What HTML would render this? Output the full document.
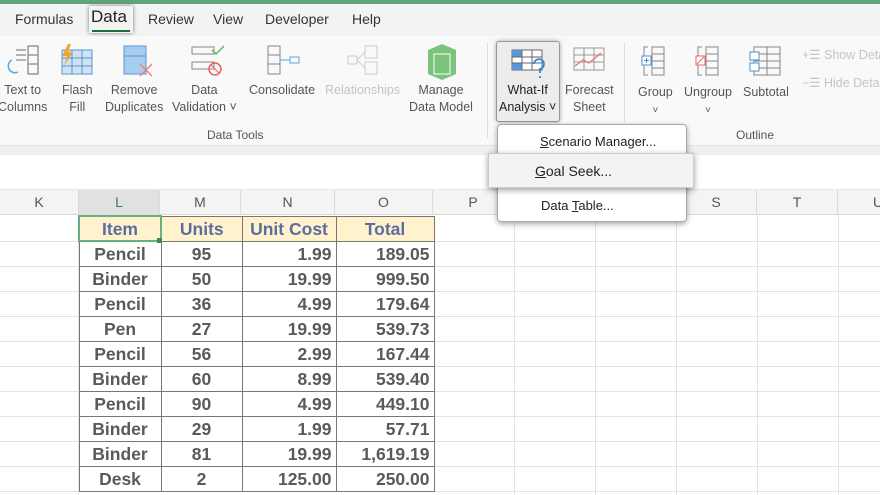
<!DOCTYPE html>
<html><head><meta charset="utf-8"><style>
*{margin:0;padding:0;box-sizing:border-box}
body{width:880px;height:495px;overflow:hidden;background:#fff;font-family:"Liberation Sans",sans-serif;position:relative}
.a{position:absolute}
.tab{position:absolute;top:11px;font-size:14px;color:#333}
.lbl{position:absolute;font-size:12.5px;color:#555;text-align:center;line-height:17px;white-space:nowrap}
.dis{color:#c4c4c4}
.ch{position:absolute;top:190px;height:25px;font-size:14px;color:#555;text-align:center;line-height:25px;border-right:1px solid #dadada}
.vl{position:absolute;top:215px;height:280px;width:1px;background:#e3e3e3}
.hl{position:absolute;left:0;width:880px;height:1px;background:#e3e3e3}
table{position:absolute;left:78px;top:215px;border-collapse:collapse;table-layout:fixed;width:355px;font-weight:bold;font-size:17.5px;color:#5a5a5a}
td{height:25px;border:1.5px solid #777;padding:0 4px;line-height:22px;overflow:hidden;white-space:nowrap}
td.c{text-align:center}td.r{text-align:right}
tr.h td{background:#fff2cc;color:#5a6ea0;text-align:center;border-color:#777}
.mi{position:absolute;font-size:13px;color:#222}
</style></head><body>
<div class="a" style="left:0;top:0;width:880px;height:4px;background:#5fa57a"></div>
<div class="a" style="left:0;top:4px;width:880px;height:32px;background:#f3f3f3"></div>
<div class="tab" style="left:15px">Formulas</div>
<div class="a" style="left:89px;top:6px;width:44px;height:27px;box-shadow:0 0 4px rgba(0,0,0,.5);background:#f3f3f3"></div>
<div class="tab" style="left:91px;top:7px;font-size:17px;color:#222">Data</div>
<div class="a" style="left:92px;top:30px;width:38px;height:2px;background:#1d6f42"></div>
<div class="tab" style="left:148px">Review</div>
<div class="tab" style="left:213px">View</div>
<div class="tab" style="left:265px">Developer</div>
<div class="tab" style="left:352px">Help</div>
<div class="a" style="left:0;top:36px;width:880px;height:111px;background:#f9f9f9"></div>
<div class="a" style="left:0;top:145px;width:880px;height:10px;background:#efefef;border-top:1px solid #e0e0e0"></div>
<svg class="a" style="left:0;top:42px" width="470" height="40">
<g fill="none" stroke="#888" stroke-width="1.3"><path d="M16 8h10M16 13h10M16 18h10"/><rect x="28" y="4" width="10" height="28"/><path d="M28 13h10M28 22h10"/></g>
<path d="M12 18a6 6 0 1 0 6 12" stroke="#5aa7e0" fill="none" stroke-width="1.5"/>
<rect x="62" y="8" width="30" height="24" fill="#cfe3f5" stroke="#5a96cc"/><path d="M62 16h30M62 24h30M72 8v24M82 8v24" stroke="#5a96cc"/>
<path d="M68 2l-6 12h5l-3 10 9-14h-5l3-8z" fill="#f3a330"/>
<rect x="124" y="4" width="22" height="28" fill="#a7cef0" stroke="#5a96cc"/><path d="M124 14h22" stroke="#5a96cc"/><path d="M140 22l12 12M152 22l-12 12" stroke="#f08080" stroke-width="1.5"/>
<g stroke="#888" fill="none"><rect x="192" y="5" width="22" height="7"/><rect x="192" y="20" width="22" height="7"/></g><path d="M212 8l4 4 8-8" stroke="#5cb85c" fill="none" stroke-width="1.5"/><circle cx="215" cy="27" r="6" fill="none" stroke="#f06060" stroke-width="1.5"/><path d="M211 23l8 8" stroke="#f06060"/>
<g stroke="#888" fill="none"><rect x="268" y="4" width="12" height="28"/><path d="M268 13h12M268 22h12"/></g><path d="M280 18h10" stroke="#5aa7e0"/><rect x="290" y="15" width="9" height="6" fill="none" stroke="#5aa7e0"/>
<g stroke="#ccc" fill="none"><rect x="348" y="14" width="9" height="8"/><rect x="365" y="4" width="12" height="12"/><rect x="365" y="20" width="12" height="12"/><path d="M357 18l8-8M357 18l8 8"/></g>
<path d="M428 8l14-6 14 6v24l-14 6-14-6z" fill="#7cc47c"/><rect x="434" y="12" width="16" height="20" fill="none" stroke="#fff"/>
</svg>
<div class="lbl" style="left:-2px;top:82px">Text to<br>Columns</div>
<div class="lbl" style="left:62px;top:82px">Flash<br>Fill</div>
<div class="lbl" style="left:105px;top:82px">Remove<br>Duplicates</div>
<div class="lbl" style="left:172px;top:82px">Data<br>Validation ˅</div>
<div class="lbl" style="left:249px;top:82px">Consolidate</div>
<div class="lbl dis" style="left:325px;top:82px">Relationships</div>
<div class="lbl" style="left:409px;top:82px">Manage<br>Data Model</div>
<div class="lbl" style="left:207px;top:127px;font-size:12px">Data Tools</div>
<div class="a" style="left:487px;top:42px;width:1px;height:96px;background:#ddd"></div>
<div class="a" style="left:624px;top:42px;width:1px;height:80px;background:#ddd"></div>
<div class="a" style="left:496px;top:41px;width:64px;height:81px;background:#ececec;border:1px solid #999;border-radius:3px;box-shadow:0 0 4px rgba(0,0,0,.35)"></div>
<svg class="a" style="left:510px;top:48px" width="40" height="34"><rect x="2" y="2" width="30" height="20" fill="#fff" stroke="#666"/><rect x="2" y="2" width="10" height="7" fill="#5a96d8"/><rect x="2" y="15" width="10" height="7" fill="#5a96d8"/><path d="M2 9h30M2 15h30M12 2v20M22 2v20" stroke="#666"/><path d="M24 16a5 5 0 1 1 6 5v4M30 28v2" stroke="#2a8ad8" stroke-width="1.8" fill="none"/></svg>
<div class="lbl" style="left:499px;top:82px;color:#222">What-If<br>Analysis ˅</div>
<svg class="a" style="left:571px;top:46px" width="36" height="30"><g stroke="#999" fill="none"><rect x="3" y="2" width="30" height="22"/><path d="M3 9h30M3 16h30M13 2v22M23 2v22"/></g><path d="M4 20l8-6 6 3 12-10" stroke="#f07070" fill="none" stroke-width="1.3"/></svg>
<div class="lbl" style="left:565px;top:82px">Forecast<br>Sheet</div>
<svg class="a" style="left:640px;top:44px" width="150" height="34"><g stroke="#888" fill="none"><rect x="12" y="3" width="12" height="28"/><path d="M12 10h12M12 17h12M12 24h12M8 3H4v28h4"/><rect x="66" y="3" width="12" height="28"/><path d="M66 10h12M66 17h12M66 24h12M62 3h-4v28h4"/><rect x="114" y="3" width="26" height="28"/><path d="M114 10h26M114 17h26M114 24h26M127 3v28"/></g>
<rect x="2" y="12" width="9" height="9" fill="#fff" stroke="#4a90d0"/><path d="M6.5 14v5M4 16.5h5" stroke="#4a90d0"/>
<rect x="56" y="12" width="9" height="9" fill="#fff" stroke="#f06060"/><path d="M57 20l7-7" stroke="#f06060"/>
<rect x="110" y="8" width="9" height="8" fill="#fff" stroke="#4a90d0"/><rect x="110" y="19" width="9" height="8" fill="#fff" stroke="#4a90d0"/></svg>
<div class="lbl" style="left:638px;top:84px">Group<br><span style="font-size:10px">˅</span></div>
<div class="lbl" style="left:684px;top:84px">Ungroup<br><span style="font-size:10px">˅</span></div>
<div class="lbl" style="left:743px;top:84px">Subtotal</div>
<div class="lbl dis" style="left:802px;top:47px">+☰ Show Deta</div>
<div class="lbl dis" style="left:802px;top:75px">−☰ Hide Deta</div>
<div class="lbl" style="left:736px;top:127px;font-size:12px">Outline</div>
<div class="a" style="left:0;top:189px;width:880px;height:26px;background:#f4f4f4;border-top:1px solid #e6e6e6;border-bottom:1px solid #dadada"></div>
<div class="ch" style="left:0;width:79px">K</div>
<div class="ch" style="left:79px;width:81px;background:#e1e1e1;color:#3a7a55">L</div>
<div class="ch" style="left:160px;width:81px">M</div>
<div class="ch" style="left:241px;width:94px">N</div>
<div class="ch" style="left:335px;width:98px">O</div>
<div class="ch" style="left:433px;width:81px">P</div>
<div class="ch" style="left:514px;width:81px"></div>
<div class="ch" style="left:595px;width:81px"></div>
<div class="ch" style="left:676px;width:81px">S</div>
<div class="ch" style="left:757px;width:81px">T</div>
<div class="ch" style="left:838px;width:81px">U</div>
<div class="vl" style="left:514px"></div><div class="vl" style="left:595px"></div><div class="vl" style="left:676px"></div><div class="vl" style="left:757px"></div><div class="vl" style="left:838px"></div><div class="vl" style="left:78px"></div>
<div class="hl" style="top:241px"></div><div class="hl" style="top:266px"></div><div class="hl" style="top:291px"></div><div class="hl" style="top:316px"></div><div class="hl" style="top:341px"></div><div class="hl" style="top:366px"></div><div class="hl" style="top:391px"></div><div class="hl" style="top:416px"></div><div class="hl" style="top:441px"></div><div class="hl" style="top:466px"></div><div class="hl" style="top:491px"></div>
<table>
<colgroup><col style="width:82px"><col style="width:81px"><col style="width:94px"><col style="width:98px"></colgroup>
<tr class="h"><td style="border:2px solid #6aae86">Item</td><td>Units</td><td>Unit Cost</td><td>Total</td></tr>
<tr><td class="c">Pencil</td><td class="c">95</td><td class="r">1.99</td><td class="r">189.05</td></tr>
<tr><td class="c">Binder</td><td class="c">50</td><td class="r">19.99</td><td class="r">999.50</td></tr>
<tr><td class="c">Pencil</td><td class="c">36</td><td class="r">4.99</td><td class="r">179.64</td></tr>
<tr><td class="c">Pen</td><td class="c">27</td><td class="r">19.99</td><td class="r">539.73</td></tr>
<tr><td class="c">Pencil</td><td class="c">56</td><td class="r">2.99</td><td class="r">167.44</td></tr>
<tr><td class="c">Binder</td><td class="c">60</td><td class="r">8.99</td><td class="r">539.40</td></tr>
<tr><td class="c">Pencil</td><td class="c">90</td><td class="r">4.99</td><td class="r">449.10</td></tr>
<tr><td class="c">Binder</td><td class="c">29</td><td class="r">1.99</td><td class="r">57.71</td></tr>
<tr><td class="c">Binder</td><td class="c">81</td><td class="r">19.99</td><td class="r">1,619.19</td></tr>
<tr><td class="c">Desk</td><td class="c">2</td><td class="r">125.00</td><td class="r">250.00</td></tr>
</table>
<div class="a" style="left:157px;top:238px;width:5px;height:5px;background:#3a8a5a"></div>
<div class="a" style="left:497px;top:124px;width:190px;height:98px;background:#fff;border:1px solid #aaa;border-radius:4px;box-shadow:0 2px 6px rgba(0,0,0,.35)"></div>
<div class="mi" style="left:540px;top:134px"><u>S</u>cenario Manager...</div>
<div class="a" style="left:488px;top:153px;width:206px;height:35px;background:#f3f3f3;border:1px solid #ccc;box-shadow:0 2px 6px rgba(0,0,0,.4)"></div>
<div class="mi" style="left:535px;top:163px;font-size:14px"><u>G</u>oal Seek...</div>
<div class="mi" style="left:541px;top:198px">Data <u>T</u>able...</div>
</body></html>
